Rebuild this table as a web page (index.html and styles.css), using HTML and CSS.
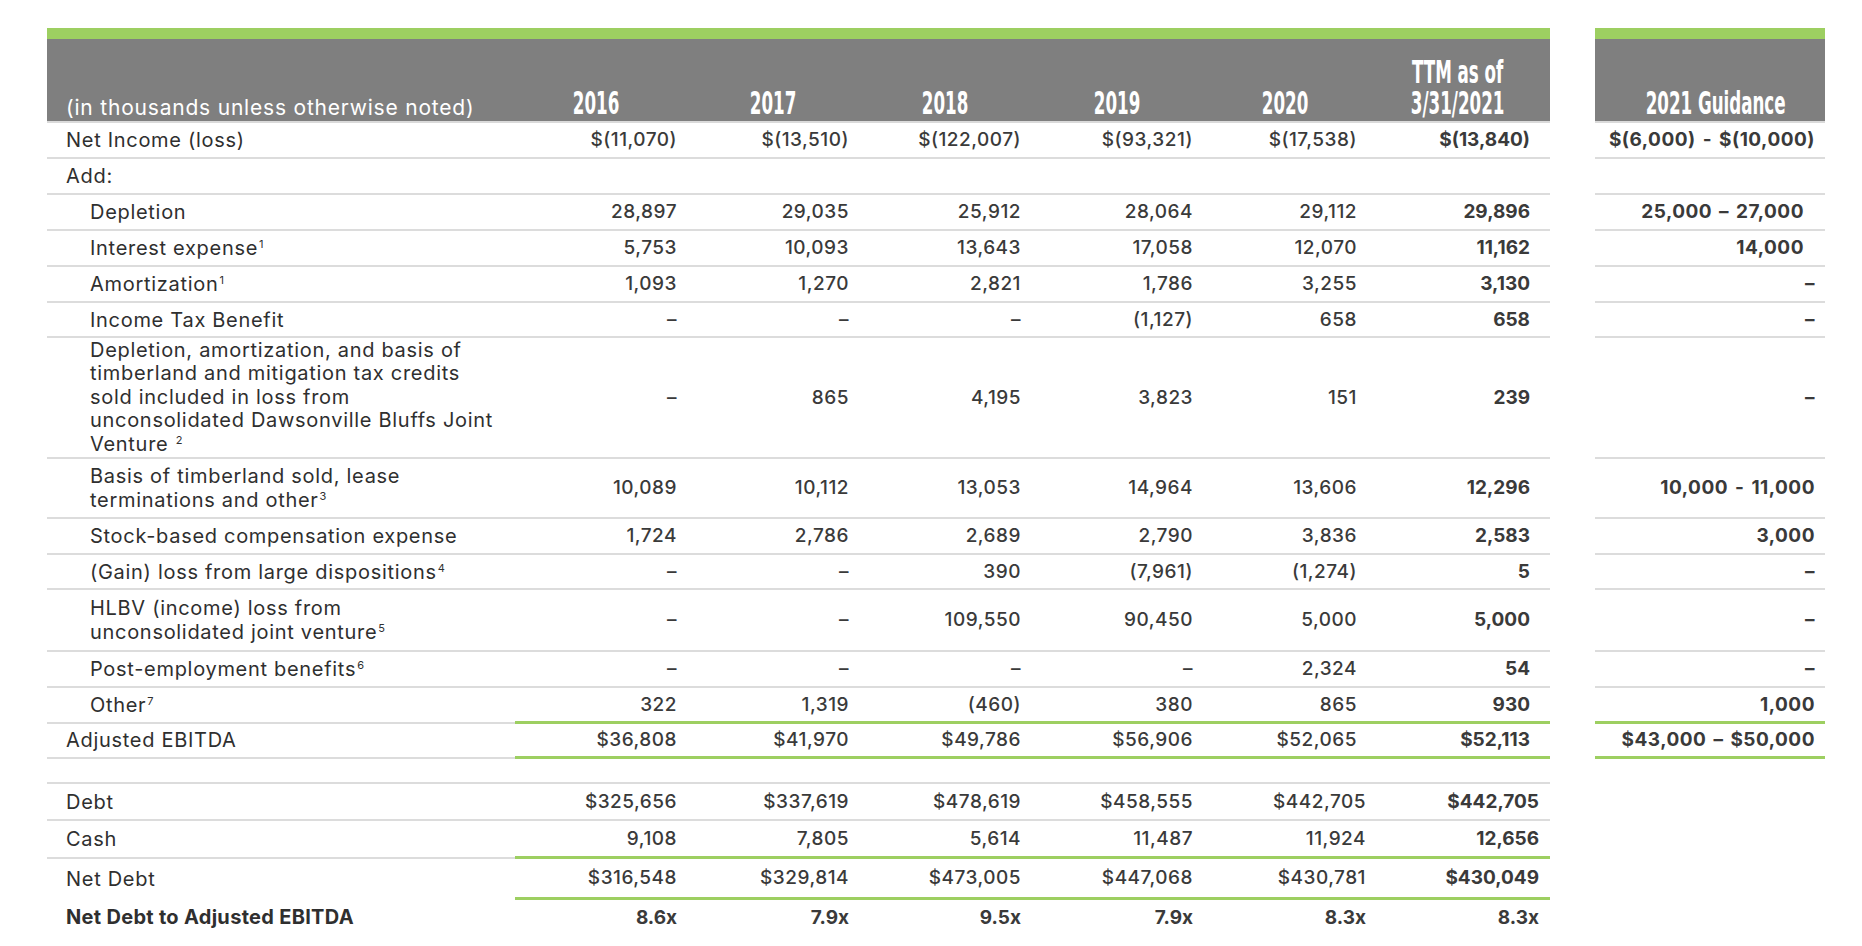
FILE: index.html
```html
<!DOCTYPE html>
<html lang="en">
<head>
<meta charset="utf-8">
<title>Adjusted EBITDA Reconciliation</title>
<link rel="stylesheet" href="styles.css">
</head>
<body>
<div class="wrap">
  <table class="fin main">
    <colgroup>
      <col class="c-label"><col class="c-y1"><col class="c-y"><col class="c-y"><col class="c-y"><col class="c-y5"><col class="c-ttm">
    </colgroup>
    <thead>
      <tr>
        <th class="lbl">(in thousands unless otherwise noted)</th>
        <th class="yh"><span class="yr">2016</span></th>
        <th class="yh"><span class="yr">2017</span></th>
        <th class="yh"><span class="yr">2018</span></th>
        <th class="yh"><span class="yr">2019</span></th>
        <th class="yh"><span class="yr">2020</span></th>
        <th class="yh"><span class="yr">TTM as of<br>3/31/2021</span></th>
      </tr>
    </thead>
    <tbody>
      <tr class="r34"><td class="lbl">Net Income (loss)</td><td>$(11,070)</td><td>$(13,510)</td><td>$(122,007)</td><td>$(93,321)</td><td>$(17,538)</td><td class="b">$(13,840)</td></tr>
      <tr class="r34"><td class="lbl">Add:</td><td></td><td></td><td></td><td></td><td></td><td></td></tr>
      <tr class="r34"><td class="lbl ind">Depletion</td><td>28,897</td><td>29,035</td><td>25,912</td><td>28,064</td><td>29,112</td><td class="b">29,896</td></tr>
      <tr class="r34"><td class="lbl ind">Interest expense<sup>1</sup></td><td>5,753</td><td>10,093</td><td>13,643</td><td>17,058</td><td>12,070</td><td class="b">11,162</td></tr>
      <tr class="r34"><td class="lbl ind">Amortization<sup>1</sup></td><td>1,093</td><td>1,270</td><td>2,821</td><td>1,786</td><td>3,255</td><td class="b">3,130</td></tr>
      <tr class="r33"><td class="lbl ind">Income Tax Benefit</td><td>–</td><td>–</td><td>–</td><td>(1,127)</td><td>658</td><td class="b">658</td></tr>
      <tr class="rlong"><td class="lbl ind">Depletion, amortization, and basis of<br>timberland and mitigation tax credits<br>sold included in loss from<br>unconsolidated Dawsonville Bluffs Joint<br>Venture <sup>2</sup></td><td>–</td><td>865</td><td>4,195</td><td>3,823</td><td>151</td><td class="b">239</td></tr>
      <tr class="r58"><td class="lbl ind">Basis of timberland sold, lease<br>terminations and other<sup>3</sup></td><td>10,089</td><td>10,112</td><td>13,053</td><td>14,964</td><td>13,606</td><td class="b">12,296</td></tr>
      <tr class="r34"><td class="lbl ind">Stock-based compensation expense</td><td>1,724</td><td>2,786</td><td>2,689</td><td>2,790</td><td>3,836</td><td class="b">2,583</td></tr>
      <tr class="r33"><td class="lbl ind">(Gain) loss from large dispositions<sup>4</sup></td><td>–</td><td>–</td><td>390</td><td>(7,961)</td><td>(1,274)</td><td class="b">5</td></tr>
      <tr class="r60"><td class="lbl ind">HLBV (income) loss from<br>unconsolidated joint venture<sup>5</sup></td><td>–</td><td>–</td><td>109,550</td><td>90,450</td><td>5,000</td><td class="b">5,000</td></tr>
      <tr class="r34"><td class="lbl ind">Post-employment benefits<sup>6</sup></td><td>–</td><td>–</td><td>–</td><td>–</td><td>2,324</td><td class="b">54</td></tr>
      <tr class="r33 gline"><td class="lbl ind">Other<sup>7</sup></td><td>322</td><td>1,319</td><td>(460)</td><td>380</td><td>865</td><td class="b">930</td></tr>
      <tr class="r32 gline"><td class="lbl">Adjusted EBITDA</td><td>$36,808</td><td>$41,970</td><td>$49,786</td><td>$56,906</td><td>$52,065</td><td class="b">$52,113</td></tr>
      <tr class="spacer"><td colspan="7"></td></tr>
      <tr class="r35 low"><td class="lbl">Debt</td><td>$325,656</td><td>$337,619</td><td>$478,619</td><td>$458,555</td><td>$442,705</td><td class="b">$442,705</td></tr>
      <tr class="r35 low gline"><td class="lbl">Cash</td><td>9,108</td><td>7,805</td><td>5,614</td><td>11,487</td><td>11,924</td><td class="b">12,656</td></tr>
      <tr class="r38 low gline nolbl"><td class="lbl">Net Debt</td><td>$316,548</td><td>$329,814</td><td>$473,005</td><td>$447,068</td><td>$430,781</td><td class="b">$430,049</td></tr>
      <tr class="r36 low last"><td class="lbl strong">Net Debt to Adjusted EBITDA</td><td class="b">8.6x</td><td class="b">7.9x</td><td class="b">9.5x</td><td class="b">7.9x</td><td class="b">8.3x</td><td class="b">8.3x</td></tr>
    </tbody>
  </table>

  <table class="fin guide">
    <thead>
      <tr><th class="gh"><span class="yr">2021 Guidance</span></th></tr>
    </thead>
    <tbody>
      <tr class="r34"><td class="b">$(6,000) - $(10,000)</td></tr>
      <tr class="r34"><td></td></tr>
      <tr class="r34"><td class="b in">25,000 – 27,000</td></tr>
      <tr class="r34"><td class="b in">14,000</td></tr>
      <tr class="r34"><td class="b">–</td></tr>
      <tr class="r33"><td class="b">–</td></tr>
      <tr class="rlong"><td class="b">–</td></tr>
      <tr class="r58"><td class="b">10,000 - 11,000</td></tr>
      <tr class="r34"><td class="b">3,000</td></tr>
      <tr class="r33"><td class="b">–</td></tr>
      <tr class="r60"><td class="b">–</td></tr>
      <tr class="r34"><td class="b">–</td></tr>
      <tr class="r33 gline"><td class="b">1,000</td></tr>
      <tr class="r32 gline"><td class="b">$43,000 – $50,000</td></tr>
    </tbody>
  </table>
</div>
</body>
</html>
```

FILE: styles.css
```css
html, body {
  background: #ffffff;
}
body {
  margin: 0;
  padding: 28px 0 0 47px;
  font-family: "Inter", "Open Sans", "Noto Sans", sans-serif;
  font-size: 19px;
  color: #333333;
}
.wrap {
  display: flex;
  align-items: flex-start;
  gap: 45px;
}
.fin {
  border-collapse: collapse;
  table-layout: fixed;
}
.main { width: 1503px; }
.guide { width: 230px; }
.c-label { width: 468px; }
.c-y1 { width: 182px; }
.c-y { width: 172px; }
.c-y5 { width: 164px; }
.c-ttm { width: 173px; }

.fin th {
  background: #7f7f7f;
  color: #ffffff;
  border-top: 11px solid #9dcf61;
  border-bottom: 2px solid #dadada;
  height: 80px;
  padding: 0 20px 2px 0;
  vertical-align: bottom;
  text-align: center;
  font-weight: 400;
}
.fin th.lbl {
  text-align: left;
  padding: 0 0 1px 19px;
  font-size: 21px;
  letter-spacing: 0.8px;
  line-height: 24px;
  white-space: nowrap;
}
.fin th.gh { padding-right: 10px; }
.yr {
  display: inline-block;
  font-family: "DejaVu Sans Condensed", "DejaVu Sans", sans-serif;
  font-weight: 700;
  font-size: 32px;
  line-height: 31px;
  transform: scaleX(0.58);
  white-space: nowrap;
}

.fin td {
  border-bottom: 2px solid #dcdcdc;
  padding: 0 20px 0 0;
  text-align: right;
  vertical-align: middle;
  line-height: 24px;
  font-weight: 500;
  letter-spacing: 0.5px;
  white-space: nowrap;
  color: #3a3a3a;
}
.fin td.lbl {
  text-align: left;
  padding-left: 19px;
  padding-right: 0;
  font-size: 20px;
  letter-spacing: 0.7px;
  font-weight: 400;
  color: #2f2f2f;
}
.fin td.ind { padding-left: 43px; }
.fin td.b { font-weight: 700; letter-spacing: 0; }
.fin td.strong { font-weight: 700; letter-spacing: 0.3px; }
.guide td { padding-right: 10px; }
.guide td.b { letter-spacing: 0.5px; word-spacing: 2px; }
.guide td.in { padding-right: 21px; }

.r32 td { height: 32px; }
.r33 td { height: 33px; }
.r34 td { height: 34px; }
.r35 td { height: 35px; }
.r36 td { height: 36px; }
.r38 td { height: 38px; }
.r58 td { height: 58px; }
.r60 td { height: 60px; }
.rlong td { height: 119px; }
.rlong td.lbl { line-height: 23.6px; }

.gline td { border-bottom: 3px solid #9dcf61; }
.gline td.lbl { border-bottom: 2px solid #dcdcdc; }
.nolbl td.lbl { border-bottom: 0 none; }
.last td { border-bottom: 0 none; }

.spacer td {
  height: 23px;
  padding: 0;
}

.low td:nth-child(6),
.low td:nth-child(7) { padding-right: 11px; }

sup {
  font-size: 11px;
  line-height: 0;
  vertical-align: 7px;
  margin-left: 1px;
  letter-spacing: 0;
}
```
